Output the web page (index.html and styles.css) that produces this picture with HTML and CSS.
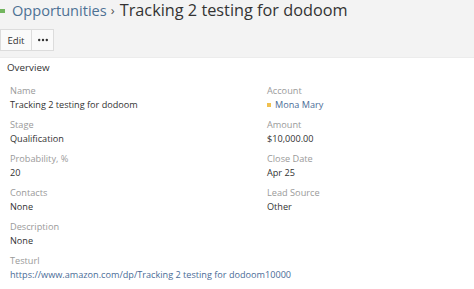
FILE: index.html
```html
<!DOCTYPE html>
<html>
<head>
<meta charset="utf-8">
<link rel="stylesheet" href="styles.css">
</head>
<body>
<div class="top">
  <div class="header">
    <span class="scope-mark"></span>
    <a class="crumb">Opportunities</a>
    <span class="sep">›</span>
    <span class="title">Tracking 2 testing for dodoom</span>
  </div>
  <div class="btn-group">
    <button class="btn">Edit</button>
    <button class="btn btn-more" aria-label="More"><svg width="12" height="4" viewBox="0 0 12 4"><circle cx="2.2" cy="2" r="1.2" fill="#333"/><circle cx="6" cy="2" r="1.2" fill="#333"/><circle cx="9.8" cy="2" r="1.2" fill="#333"/></svg></button>
  </div>
</div>
<div class="panel">
  <div class="panel-heading">Overview</div>
  <div class="panel-body">
    <div class="grid">
      <div class="field"><div class="label">Name</div><div class="value">Tracking 2 testing for dodoom</div></div>
      <div class="field"><div class="label">Account</div><div class="value"><span class="acc-mark"></span><a class="link">Mona Mary</a></div></div>
      <div class="field"><div class="label">Stage</div><div class="value">Qualification</div></div>
      <div class="field"><div class="label">Amount</div><div class="value">$10,000.00</div></div>
      <div class="field"><div class="label">Probability, %</div><div class="value">20</div></div>
      <div class="field"><div class="label">Close Date</div><div class="value">Apr 25</div></div>
      <div class="field"><div class="label">Contacts</div><div class="value">None</div></div>
      <div class="field"><div class="label">Lead Source</div><div class="value">Other</div></div>
      <div class="field wide"><div class="label">Description</div><div class="value">None</div></div>
      <div class="field wide"><div class="label">Testurl</div><div class="value"><a class="link">https://www.amazon.com/dp/Tracking 2 testing for dodoom10000</a></div></div>
    </div>
  </div>
</div>
</body>
</html>
```
FILE: styles.css
```css
html, body {
  margin: 0;
  padding: 0;
  background: #fff;
  font-family: "Open Sans", sans-serif;
  color: #333;
}
.top {
  background: #f3f3f3;
  height: 57px;
  display: flex;
  flex-direction: column;
}
.header {
  display: flex;
  align-items: center;
  height: 20px;
  font-size: 14.6px;
  line-height: 20px;
  white-space: nowrap;
}
.scope-mark {
  width: 5px;
  height: 4px;
  background: #72b55e;
  margin-right: 7px;
  margin-top: 1px;
}
.crumb {
  color: #4d7193;
}
.sep {
  color: #555;
  margin: 0 5px 0 4px;
  font-size: 13px;
}
.title {
  color: #333;
  font-size: 16.3px;
}
.btn-group {
  display: flex;
  margin-top: 9px;
}
.btn {
  font-family: "Open Sans", sans-serif;
  font-size: 9.6px;
  color: #333;
  background: #fafafa;
  border: 1px solid #dcdcdc;
  height: 22px;
  width: 32px;
  padding: 0;
  margin: 0 -1px 0 0;
  display: flex;
  align-items: center;
  justify-content: center;
}
.btn-more {
  width: 23px;
}
.panel {
  background: #fff;
  border-top: 1px solid #ececec;
}
.panel-heading {
  font-size: 9.8px;
  color: #333;
  padding: 2px 7px 0;
  height: 24px;
  line-height: 16px;
}
.panel-body {
  padding: 0 10px;
}
.grid {
  display: grid;
  grid-template-columns: 257px 1fr;
  row-gap: 6px;
}
.field.wide {
  grid-column: 1 / span 2;
}
.label {
  font-size: 9.2px;
  color: #9a9a9a;
  line-height: 14px;
}
.value {
  font-size: 9.15px;
  color: #333;
  line-height: 14px;
  display: flex;
  align-items: center;
}
.link {
  color: #4a6c97;
}
.acc-mark {
  width: 4px;
  height: 4px;
  background: #f0c050;
  margin-right: 4px;
}
```
